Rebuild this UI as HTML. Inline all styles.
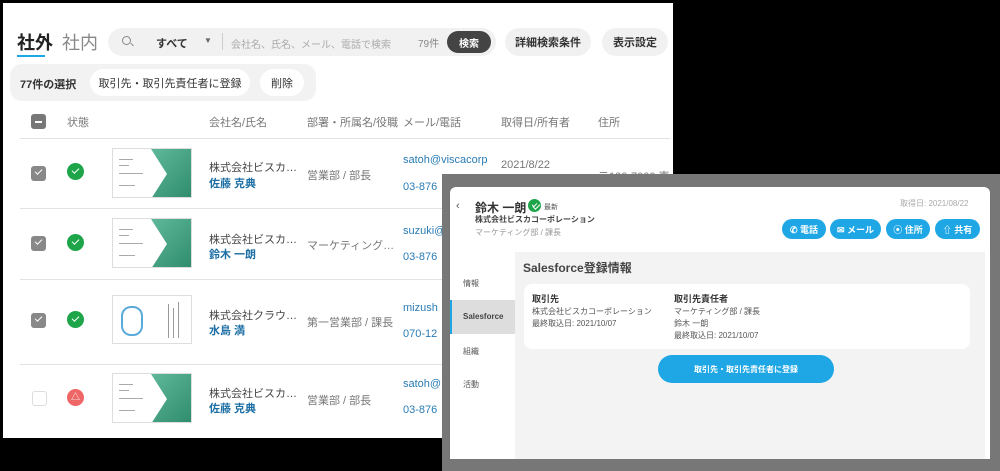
<!DOCTYPE html>
<html><head><meta charset="utf-8"><style>
*{margin:0;padding:0;box-sizing:border-box}
body{width:1000px;height:471px;background:#000;position:relative;overflow:hidden;font-family:"Liberation Sans","Noto Sans CJK JP",sans-serif;color:#333}
.a{position:absolute}
.main{left:3px;top:3px;width:670px;height:435px;background:#fff}
.pill{position:absolute;background:#f1f1f1;border-radius:16px;font-size:11px;color:#333;display:flex;align-items:center;justify-content:center}
.wp{position:absolute;background:#fff;border-radius:14px;font-size:11px;display:flex;align-items:center;justify-content:center;color:#333}
.hd{font-size:11px;color:#777;position:absolute;top:114px}
.sep{position:absolute;left:20px;width:650px;height:1px;background:#e3e3e3}
.cb{position:absolute;left:31px;width:15px;height:15px;border-radius:3px;background:#888}
.cb::after{content:"";position:absolute;left:4px;top:3px;width:6px;height:3px;border-left:1.5px solid #fff;border-bottom:1.5px solid #fff;transform:rotate(-45deg)}
.ok{position:absolute;left:67px;width:17px;height:17px;border-radius:50%;background:#1ea54a}
.ok::after{content:"";position:absolute;left:5px;top:5px;width:6px;height:3px;border-left:1.5px solid #fff;border-bottom:1.5px solid #fff;transform:rotate(-45deg)}
.card{position:absolute;left:112px;width:80px;height:50px;border:1px solid #ddd;background:#fff;overflow:hidden}
.card .g{position:absolute;right:0;top:0;width:40px;height:50px;background:linear-gradient(135deg,#5fb89a,#2e8c6c)}
.card .w{position:absolute;top:0;width:0;height:0;border-top:25px solid transparent;border-bottom:25px solid transparent;border-left:16px solid #fff;right:24px}
.card i{position:absolute;left:6px;height:1px;background:#aaa}
.co{position:absolute;left:209px;font-size:11px;color:#444}
.nm{position:absolute;left:209px;font-size:11px;color:#1d6fa5;font-weight:bold}
.dp{position:absolute;left:307px;font-size:11px;color:#777}
.em{position:absolute;left:403px;font-size:11px;color:#2a7cb5}
.bb{position:absolute;background:#1ea7e4;color:#fff;border-radius:11px;font-size:9px;font-weight:bold;display:flex;align-items:center;justify-content:center}
.sm{font-size:8px;color:#555;position:absolute}
</style></head><body>
<div class="a main"></div>
<div class="a" style="left:17px;top:29px;font-size:18px;font-weight:bold;color:#222">社外</div>
<div class="a" style="left:17px;top:55px;width:28px;height:2px;background:#1ea7e4"></div>
<div class="a" style="left:62px;top:29px;font-size:18px;color:#888">社内</div>
<div class="pill" style="left:108px;top:28px;width:388px;height:28px;justify-content:flex-start"></div>
<div class="a" style="left:122px;top:36px;width:9px;height:9px;border:1.3px solid #888;border-radius:50%"></div>
<div class="a" style="left:130px;top:44px;width:4px;height:1.3px;background:#888;transform:rotate(45deg)"></div>
<div class="a" style="left:156px;top:35px;font-size:11px;font-weight:bold">すべて</div>
<div class="a" style="left:204px;top:36px;font-size:8px;color:#666">▼</div>
<div class="a" style="left:222px;top:33px;width:1px;height:17px;background:#ccc"></div>
<div class="a" style="left:231px;top:36px;font-size:10px;color:#aaa">会社名、氏名、メール、電話で検索</div>
<div class="a" style="left:418px;top:35px;font-size:10px;color:#888">79件</div>
<div class="a" style="left:447px;top:31px;width:44px;height:22px;border-radius:11px;background:#444;color:#fff;font-size:10px;font-weight:bold;display:flex;align-items:center;justify-content:center">検索</div>
<div class="pill" style="left:505px;top:28px;width:86px;height:28px;font-weight:bold">詳細検索条件</div>
<div class="pill" style="left:602px;top:28px;width:66px;height:28px;font-weight:bold">表示設定</div>
<div class="a" style="left:10px;top:64px;width:306px;height:37px;background:#f2f2f2;border-radius:12px"></div>
<div class="a" style="left:20px;top:76px;font-size:11px;font-weight:bold">77件の選択</div>
<div class="wp" style="left:90px;top:69px;width:160px;height:27px">取引先・取引先責任者に登録</div>
<div class="wp" style="left:260px;top:69px;width:44px;height:27px">削除</div>
<div class="a" style="left:31px;top:114px;width:15px;height:15px;border-radius:3px;background:#777"><div style="margin:7px 4px;height:1.5px;background:#fff"></div></div>
<div class="hd" style="left:67px">状態</div>
<div class="hd" style="left:209px">会社名/氏名</div>
<div class="hd" style="left:307px">部署・所属名/役職</div>
<div class="hd" style="left:403px">メール/電話</div>
<div class="hd" style="left:501px">取得日/所有者</div>
<div class="hd" style="left:598px">住所</div>
<div class="sep" style="top:138px"></div>
<div class="sep" style="top:208px"></div>
<div class="sep" style="top:279px"></div>
<div class="sep" style="top:364px"></div>

<div class="cb" style="top:166px"></div><div class="ok" style="top:163px"></div>
<div class="card" style="top:148px"><div class="g"></div><div class="w"></div><i style="top:10px;width:14px"></i><i style="top:16px;width:10px"></i><i style="top:24px;width:24px"></i><i style="top:36px;width:16px"></i></div>
<div class="co" style="top:159px">株式会社ビスカ…</div><div class="nm" style="top:175px">佐藤 克典</div>
<div class="dp" style="top:167px">営業部 / 部長</div>
<div class="em" style="top:154px">satoh@viscacorp</div><div class="em" style="top:181px">03-876</div>
<div class="a" style="left:501px;top:159px;font-size:11px;color:#777">2021/8/22</div>
<div class="a" style="left:598px;top:168px;font-size:11px;color:#777">〒100-7000 東</div>

<div class="cb" style="top:236px"></div><div class="ok" style="top:234px"></div>
<div class="card" style="top:218px"><div class="g"></div><div class="w"></div><i style="top:10px;width:14px"></i><i style="top:16px;width:10px"></i><i style="top:24px;width:24px"></i><i style="top:36px;width:16px"></i></div>
<div class="co" style="top:231px">株式会社ビスカ…</div><div class="nm" style="top:246px">鈴木 一朗</div>
<div class="dp" style="top:237px">マーケティング…</div>
<div class="em" style="top:225px">suzuki@</div><div class="em" style="top:251px">03-876</div>

<div class="cb" style="top:313px"></div><div class="ok" style="top:311px"></div>
<div class="card" style="top:295px;height:49px"><div style="position:absolute;left:8px;top:10px;width:22px;height:30px;border:2px solid #5aa9dc;border-radius:10px"></div><i style="left:55px;top:8px;width:1px;height:34px;background:#999"></i><i style="left:60px;top:12px;width:1px;height:30px;background:#999"></i><i style="left:65px;top:6px;width:1px;height:36px;background:#999"></i></div>
<div class="co" style="top:307px">株式会社クラウ…</div><div class="nm" style="top:322px">水島 満</div>
<div class="dp" style="top:314px">第一営業部 / 課長</div>
<div class="em" style="top:302px">mizush</div><div class="em" style="top:328px">070-12</div>

<div class="a" style="left:32px;top:391px;width:15px;height:15px;border:1px solid #ddd;border-radius:3px"></div>
<div class="a" style="left:67px;top:389px;width:17px;height:17px;border-radius:50%;background:#e66;color:#fff;font-size:9px;text-align:center;line-height:17px">△</div>
<div class="card" style="top:373px"><div class="g"></div><div class="w"></div><i style="top:10px;width:14px"></i><i style="top:16px;width:10px"></i><i style="top:24px;width:24px"></i><i style="top:36px;width:16px"></i></div>
<div class="co" style="top:385px">株式会社ビスカ…</div><div class="nm" style="top:400px">佐藤 克典</div>
<div class="dp" style="top:392px">営業部 / 部長</div>
<div class="em" style="top:378px">satoh@</div><div class="em" style="top:404px">03-876</div>

<!-- modal -->
<div class="a" style="left:442px;top:174px;width:558px;height:297px;background:#777"></div>
<div class="a" style="left:450px;top:187px;width:540px;height:272px;background:#fff;border-radius:6px 6px 0 0"></div>
<div class="a" style="left:515px;top:252px;width:470px;height:207px;background:#f3f3f3"></div>
<div class="a" style="left:456px;top:200px;font-size:11px;color:#555">‹</div>
<div class="a" style="left:475px;top:199px;font-size:12px;font-weight:bold">鈴木 一朗</div>
<div class="ok" style="left:528px;top:199px;width:13px;height:13px"></div>
<div class="a" style="left:529px;top:201px;width:11px;height:9px"><div style="position:absolute;left:3px;top:2px;width:5px;height:3px;border-left:1.5px solid #fff;border-bottom:1.5px solid #fff;transform:rotate(-45deg)"></div></div>
<div class="a" style="left:544px;top:202px;font-size:7px;color:#555">最新</div>
<div class="a" style="left:475px;top:214px;font-size:8px;font-weight:bold;color:#444">株式会社ビスカコーポレーション</div>
<div class="a" style="left:475px;top:227px;font-size:8px;color:#999">マーケティング部 / 課長</div>
<div class="a" style="left:900px;top:198px;font-size:8px;color:#aaa">取得日: 2021/08/22</div>
<div class="bb" style="left:782px;top:219px;width:44px;height:20px">✆ 電話</div>
<div class="bb" style="left:830px;top:219px;width:51px;height:20px">✉ メール</div>
<div class="bb" style="left:886px;top:219px;width:44px;height:20px">⦿ 住所</div>
<div class="bb" style="left:935px;top:219px;width:45px;height:20px">⇧ 共有</div>
<div class="a" style="left:463px;top:278px;font-size:8px;color:#555">情報</div>
<div class="a" style="left:450px;top:300px;width:65px;height:34px;background:#ddd;border-left:2px solid #1ea7e4"></div>
<div class="a" style="left:463px;top:312px;font-size:8px;font-weight:bold;color:#444">Salesforce</div>
<div class="a" style="left:463px;top:346px;font-size:8px;color:#555">組織</div>
<div class="a" style="left:463px;top:379px;font-size:8px;color:#555">活動</div>
<div class="a" style="left:523px;top:259px;font-size:12px;font-weight:bold;color:#444">Salesforce登録情報</div>
<div class="a" style="left:524px;top:284px;width:446px;height:65px;background:#fff;border-radius:8px"></div>
<div class="a" style="left:532px;top:292px;font-size:9px;font-weight:bold;color:#333">取引先</div>
<div class="sm" style="left:532px;top:306px">株式会社ビスカコーポレーション</div>
<div class="sm" style="left:532px;top:318px">最終取込日: 2021/10/07</div>
<div class="a" style="left:674px;top:292px;font-size:9px;font-weight:bold;color:#333">取引先責任者</div>
<div class="sm" style="left:674px;top:306px">マーケティング部 / 課長</div>
<div class="sm" style="left:674px;top:318px">鈴木 一朗</div>
<div class="sm" style="left:674px;top:330px">最終取込日: 2021/10/07</div>
<div class="bb" style="left:658px;top:355px;width:176px;height:28px;border-radius:14px;font-size:8px">取引先・取引先責任者に登録</div>
</body></html>
